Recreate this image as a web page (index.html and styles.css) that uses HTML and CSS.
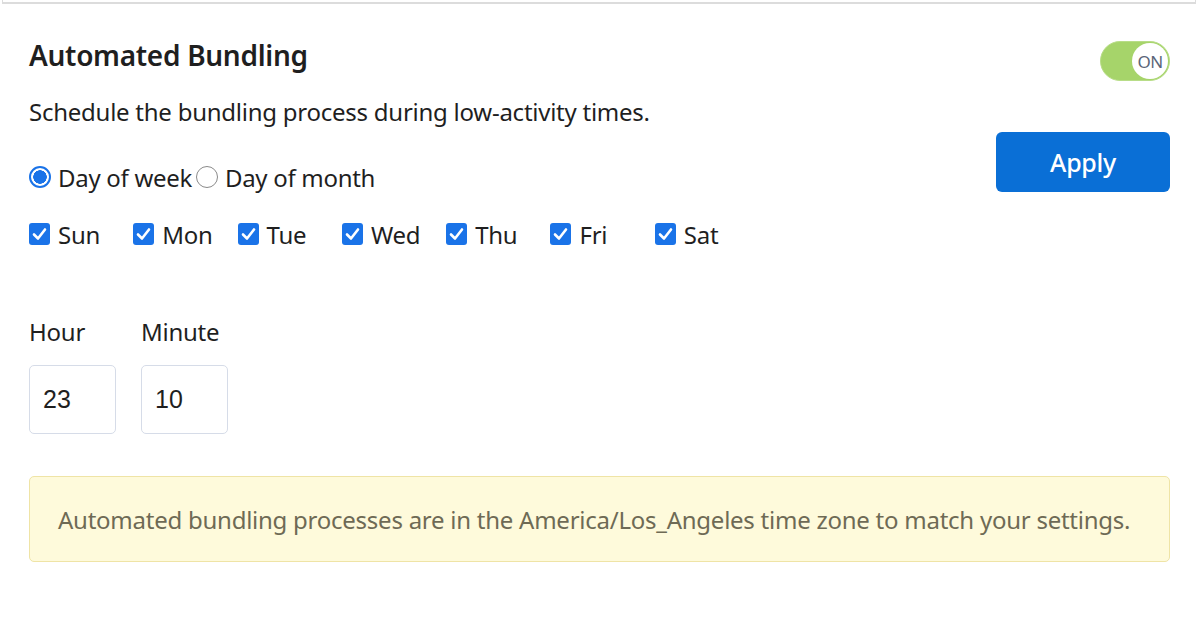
FILE: index.html
```html
<!DOCTYPE html>
<html lang="en">
<head>
<meta charset="utf-8">
<title>Automated Bundling</title>
<link rel="stylesheet" href="styles.css">
</head>
<body>
<div class="prev-card"></div>
<section class="card">
  <div class="main">
    <div class="left">
      <h2 class="title">Automated Bundling</h2>
      <p class="desc">Schedule the bundling process during low-activity times.</p>
      <div class="radios">
        <label class="radio"><input type="radio" name="mode" checked><span>Day of week</span></label>
        <label class="radio"><input type="radio" name="mode"><span>Day of month</span></label>
      </div>
      <div class="days">
        <label class="day"><input type="checkbox" checked><span>Sun</span></label>
        <label class="day"><input type="checkbox" checked><span>Mon</span></label>
        <label class="day"><input type="checkbox" checked><span>Tue</span></label>
        <label class="day"><input type="checkbox" checked><span>Wed</span></label>
        <label class="day"><input type="checkbox" checked><span>Thu</span></label>
        <label class="day"><input type="checkbox" checked><span>Fri</span></label>
        <label class="day"><input type="checkbox" checked><span>Sat</span></label>
      </div>
    </div>
    <div class="right">
      <div class="toggle"><span class="knob">ON</span></div>
      <button class="apply" type="button">Apply</button>
    </div>
  </div>
  <div class="time">
    <div class="field">
      <label class="field-label">Hour</label>
      <input class="field-input" type="text" value="23">
    </div>
    <div class="field">
      <label class="field-label">Minute</label>
      <input class="field-input" type="text" value="10">
    </div>
  </div>
  <div class="alert">Automated bundling processes are in the America/Los_Angeles time zone to match your settings.</div>
</section>
</body>
</html>
```
FILE: styles.css
```css
* { box-sizing: border-box; }
html, body { margin: 0; padding: 0; background: #ffffff; }
body {
  font-family: "Noto Sans", "Open Sans", sans-serif;
  color: #1f1f1f;
  width: 1200px;
  height: 627px;
  overflow: hidden;
}
.prev-card {
  height: 4px;
  margin: 0 4px 0 2px;
  border: 1px solid #dcdcdc;
  border-top: none;
  border-bottom: 2px solid #dcdcdc;
}
.card {
  padding: 0 30px 0 29px;
}
.main {
  display: flex;
  justify-content: space-between;
}
.left { display: flex; flex-direction: column; }
.title {
  margin: 31px 0 0 0;
  font-size: 28px;
  line-height: 40px;
  font-weight: 600;
  letter-spacing: -0.3px;
}
.desc {
  margin: 22px 0 0 0;
  font-size: 24px;
  line-height: 30px;
  letter-spacing: -0.25px;
}
.radios {
  display: flex;
  margin-top: 34px;
  height: 32px;
  align-items: center;
}
.radio {
  display: flex;
  align-items: center;
  font-size: 24px;
  letter-spacing: -0.3px;
}
.radio input {
  appearance: none;
  -webkit-appearance: none;
  width: 22px;
  height: 22px;
  margin: 0 7px 0 0;
  border: 1.5px solid #8a8a8a;
  border-radius: 50%;
  background: #fff;
}
.radio + .radio input { margin-left: 4px; }
.radio input:checked {
  border: 2px solid #1a73e8;
  background: radial-gradient(circle, #1a73e8 0 6.5px, #fff 7px);
}
.days {
  display: flex;
  margin-top: 25px;
  height: 32px;
  align-items: center;
}
.day {
  display: flex;
  align-items: center;
  width: 104.3px;
  font-size: 24px;
  letter-spacing: -0.25px;
}
.day input {
  appearance: none;
  -webkit-appearance: none;
  width: 21px;
  height: 22px;
  margin: 0 8px 0 0;
  border-radius: 3px;
  background: #1a73e8 url("data:image/svg+xml;utf8,<svg xmlns='http://www.w3.org/2000/svg' viewBox='0 0 21 22'><path d='M5 11.5 L9 15.5 L16 6.5' fill='none' stroke='white' stroke-width='2.6' stroke-linecap='round' stroke-linejoin='round'/></svg>") center/100% 100% no-repeat;
}
.right {
  display: flex;
  flex-direction: column;
  align-items: flex-end;
  padding-top: 37px;
}
.toggle {
  width: 70px;
  height: 40px;
  border-radius: 20px;
  background: #a6d46a;
  border: 1px solid #b8dd88;
  display: flex;
  align-items: center;
  justify-content: flex-end;
  padding-right: 1px;
}
.knob {
  width: 36px;
  height: 36px;
  border-radius: 50%;
  background: #fff;
  display: flex;
  align-items: center;
  justify-content: center;
  font-size: 17px;
  color: #5a6578;
  letter-spacing: -0.5px;
}
.apply {
  margin-top: 51px;
  width: 174px;
  height: 60px;
  border: none;
  border-radius: 6px;
  background: #0a6fd6;
  color: #fff;
  font-family: inherit;
  font-size: 25px;
  font-weight: 500;
  letter-spacing: -0.3px;
  padding: 0;
}
.time {
  display: flex;
  gap: 25px;
  margin-top: 67px;
}
.field { display: flex; flex-direction: column; }
.field-label {
  font-size: 24px;
  line-height: 30px;
  letter-spacing: -0.25px;
}
.field-input {
  margin-top: 18px;
  width: 87px;
  height: 69px;
  border: 1.5px solid #d6dce8;
  border-radius: 5px;
  padding: 0 0 0 13px;
  font-family: "Liberation Sans", Arial, sans-serif;
  font-size: 25px;
  color: #1f1f1f;
  background: #fff;
  outline: none;
}
.alert {
  margin-top: 42px;
  height: 86px;
  border: 1.5px solid #efe4a6;
  border-radius: 5px;
  background: #fefadb;
  display: flex;
  align-items: center;
  padding-left: 28px;
  font-size: 24px;
  color: #6e6a55;
  letter-spacing: -0.25px;
}
```
